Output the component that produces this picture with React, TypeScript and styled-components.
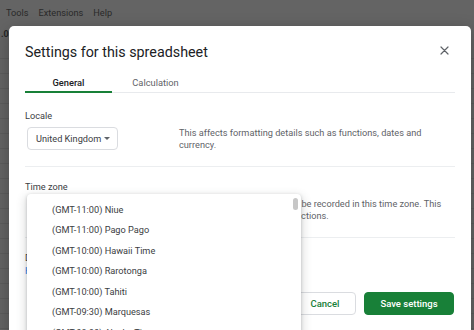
import React from 'react';
import styled, { createGlobalStyle } from 'styled-components';

const font = `Roboto, 'Liberation Sans', Arial, sans-serif`;

const GlobalStyle = createGlobalStyle`
  html, body { margin:0; padding:0; }
  body { width:474px; height:330px; overflow:hidden; font-family:${font}; }
`;

/* ========== BACKDROP (dimmed sheet) ========== */
const Screen = styled.div`
  position:relative; width:474px; height:330px; overflow:hidden;
  background:#646464; font-family:${font};
`;

const MenuBar = styled.div`
  height:24px; display:flex; align-items:center; gap:10px; padding-left:6px;
  font-size:9.2px; color:#2a2a2a;
`;

const Toolbar = styled.div`
  height:20px; display:flex; align-items:center; padding-left:1px;
  font-size:9px; font-weight:700; color:#262626;
`;

const Grid = styled.div`display:flex; flex-direction:column;`;
const GridRow = styled.div`height:14px; border-bottom:1px solid rgba(0,0,0,.07);`;

/* ========== DIALOG ========== */
const Dialog = styled.div`
  position:absolute; left:9px; top:26px; width:462px; height:330px;
  background:#fff; border-radius:5px;
  box-shadow:0 4px 16px rgba(0,0,0,.25);
`;

const Header = styled.div`
  display:flex; justify-content:space-between; align-items:flex-start;
  padding:15.5px 16.5px 0 16px;
`;
const Title = styled.h1`
  margin:0; font-size:14.3px; line-height:20px; font-weight:400; color:#202124;
`;
const CloseBtn = styled.button`
  width:20px; height:20px; margin-top:-1.5px; padding:0; border:0; background:transparent;
  display:flex; align-items:center; justify-content:center; cursor:pointer;
`;

const Tabs = styled.div`
  display:flex; margin:7.5px 16px 3px;
  box-shadow:inset 0 -1px 0 #e8eaed;
`;
const Tab = styled.div<{ $active?: boolean }>`
  width:87px; padding:8px 0 2px; text-align:center;
  font-size:9.3px; line-height:12px;
  font-weight:${p => (p.$active ? 500 : 400)};
  color:${p => (p.$active ? '#202124' : '#5f6368')};
  border-bottom:2px solid ${p => (p.$active ? '#188038' : 'transparent')};
`;

const Section = styled.div<{ $last?: boolean }>`
  margin:0 16px; padding:13.5px 0 15px;
  border-bottom:${p => (p.$last ? '0' : '1px solid #eceef0')};
`;
const Label = styled.div`
  font-size:9.2px; line-height:12px; color:#3c4043;
`;
const Row = styled.div`
  display:grid; grid-template-columns:154px 276px; align-items:start; margin-top:5.5px;
`;
const Select = styled.div`
  margin-left:2px; height:23px; box-sizing:border-box; width:max-content;
  display:inline-flex; align-items:center; gap:3px; padding:0 7px 0 8px;
  border:1px solid #dadce0; border-radius:4px;
  font-size:9.2px; color:#3c4043;
`;
const Desc = styled.p`
  margin:0; font-size:9.2px; line-height:12px; color:#5f6368;
`;
const LinkText = styled.div`
  font-size:9.2px; line-height:13px; color:#1a73e8;
`;

const Footer = styled.div`
  display:flex; justify-content:flex-end; gap:8px; padding-right:17px;
`;
const Button = styled.button<{ $primary?: boolean }>`
  height:23px; box-sizing:border-box; border-radius:4px; padding:0;
  font-family:${font}; font-size:9.5px; font-weight:500; cursor:pointer;
  width:${p => (p.$primary ? '90px' : '62px')};
  background:${p => (p.$primary ? '#188038' : '#fff')};
  color:${p => (p.$primary ? '#fff' : '#188038')};
  border:1px solid ${p => (p.$primary ? '#188038' : '#dadce0')};
`;

/* ========== TIME ZONE MENU ========== */
const Menu = styled.div`
  position:absolute; left:18px; top:168px; width:274px; height:180px;
  background:#fff; border-radius:4px; padding-top:5px; box-sizing:border-box;
  box-shadow:0 1px 3px rgba(60,64,67,.3), 0 4px 8px 3px rgba(60,64,67,.15);
`;
const MenuItem = styled.div`
  height:20.5px; display:flex; align-items:center; padding-left:25px;
  font-size:9.2px; color:#3c4043; white-space:nowrap;
`;
const Thumb = styled.div`
  position:absolute; right:3px; top:4px; width:5px; height:12px;
  border-radius:3px; background:#c7c7c7;
`;

const zones = [
  '(GMT-11:00) Niue',
  '(GMT-11:00) Pago Pago',
  '(GMT-10:00) Hawaii Time',
  '(GMT-10:00) Rarotonga',
  '(GMT-10:00) Tahiti',
  '(GMT-09:30) Marquesas',
  '(GMT-09:00) Alaska Time',
];

export default function App() {
  return (
    <>
      <GlobalStyle />
      <Screen>
        <MenuBar>
          <span>Tools</span>
          <span>Extensions</span>
          <span>Help</span>
        </MenuBar>
        <Toolbar>.0</Toolbar>
        <Grid>
          {Array.from({ length: 20 }).map((_, i) => <GridRow key={i} />)}
        </Grid>

        <Dialog role="dialog" aria-label="Settings for this spreadsheet">
          <Header>
            <Title>Settings for this spreadsheet</Title>
            <CloseBtn aria-label="Close">
              <svg width="9" height="9" viewBox="0 0 9 9" aria-hidden>
                <path d="M1 1l7 7M8 1L1 8" stroke="#5f6368" strokeWidth="1.2" strokeLinecap="round" />
              </svg>
            </CloseBtn>
          </Header>

          <Tabs>
            <Tab $active>General</Tab>
            <Tab>Calculation</Tab>
          </Tabs>

          <Section>
            <Label>Locale</Label>
            <Row>
              <Select>
                United Kingdom
                <svg width="6" height="3" viewBox="0 0 6 3" aria-hidden>
                  <path d="M0 0h6L3 3z" fill="#5f6368" />
                </svg>
              </Select>
              <Desc>This affects formatting details such as functions, dates and currency.</Desc>
            </Row>
          </Section>

          <Section>
            <Label>Time zone</Label>
            <Row>
              <Select>(GMT+00:00) GMT (no daylight saving)</Select>
              <Desc>The spreadsheet's history will be recorded in this time zone. This also affects date and time functions.</Desc>
            </Row>
          </Section>

          <Section $last>
            <Label>Display language</Label>
            <LinkText>How to change your display language</LinkText>
          </Section>

          <Footer>
            <Button>Cancel</Button>
            <Button $primary>Save settings</Button>
          </Footer>

          <Menu role="listbox">
            <Thumb />
            {zones.map(z => <MenuItem key={z}>{z}</MenuItem>)}
          </Menu>
        </Dialog>
      </Screen>
    </>
  );
}
